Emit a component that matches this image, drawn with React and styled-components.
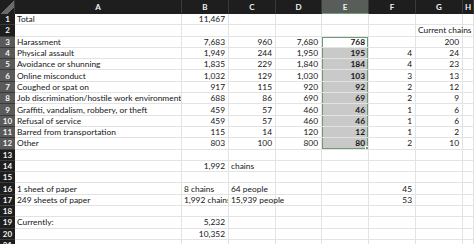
import styled, { createGlobalStyle } from "styled-components";

const GlobalStyle = createGlobalStyle`
  html, body {
    margin: 0;
    padding: 0;
    background: #ffffff;
    overflow: hidden;
  }
`;

const COLS = ["A", "B", "C", "D", "E", "F", "G", "H"];

// each row: [A, B, C, D, E, F, G]
const rows = [
  ["Total", "11,467"],
  ["", "", "", "", "", "", "Current chains"],
  ["Harassment", "7,683", "960", "7,680", "768", "", "200"],
  ["Physical assault", "1,949", "244", "1,950", "195", "4", "24"],
  ["Avoidance or shunning", "1,835", "229", "1,840", "184", "4", "23"],
  ["Online misconduct", "1,032", "129", "1,030", "103", "3", "13"],
  ["Coughed or spat on", "917", "115", "920", "92", "2", "12"],
  ["Job discrimination/hostile work environment", "688", "86", "690", "69", "2", "9"],
  ["Graffiti, vandalism, robbery, or theft", "459", "57", "460", "46", "1", "6"],
  ["Refusal of service", "459", "57", "460", "46", "1", "6"],
  ["Barred from transportation", "115", "14", "120", "12", "1", "2"],
  ["Other", "803", "100", "800", "80", "2", "10"],
  [],
  ["", "1,992", "chains"],
  [],
  ["1 sheet of paper", "8 chains", "64 people", "", "", "45"],
  ["249 sheets of paper", "1,992 chains", "15,939 people", "", "", "53"],
  [],
  ["Currently:", "5,232"],
  ["", "10,352"],
  [],
];

const isNumber = (v) => /^[\d,]+$/.test(v);

const Sheet = styled.div`
  display: grid;
  grid-template-columns: 15px 167px 47px 47px 46px 47px 47px 47px 1fr;
  grid-template-rows: 14px;
  grid-auto-rows: 11.3px;
  width: 474px;
  height: 244px;
  overflow: hidden;
  font-family: Lato, "Liberation Sans", sans-serif;
  font-size: 8.4px;
  color: #161616;
`;

const Corner = styled.div`
  background: linear-gradient(to bottom right, #1e1e1e 52%, #6a6a6a 52%, #6a6a6a 78%, #1e1e1e 78%);
  border-right: 1px solid #3a3a3a;
`;

const ColHead = styled.div`
  display: flex;
  align-items: center;
  justify-content: center;
  background: ${({ $active }) => ($active ? "#585d59" : "#1e1e1e")};
  border-right: 1px solid #3a3a3a;
  border-bottom: 1px solid ${({ $active }) => ($active ? "#6f9a76" : "#1e1e1e")};
  color: #f2f2f2;
  font-size: 8px;
  font-weight: 700;
`;

const RowHead = styled.div`
  display: flex;
  align-items: center;
  justify-content: center;
  background: ${({ $active }) => ($active ? "#5a5a5a" : "#1e1e1e")};
  border-bottom: 1px solid #3a3a3a;
  color: #f4f4f4;
  font-size: 8px;
  font-weight: 700;
`;

const Cell = styled.div`
  display: flex;
  align-items: center;
  justify-content: ${({ $num }) => ($num ? "flex-end" : "flex-start")};
  padding: 0 3px 0 2px;
  border-right: 1px solid #e3e3e3;
  border-bottom: 1px solid #e3e3e3;
  white-space: nowrap;
  overflow: ${({ $clip }) => ($clip ? "hidden" : "visible")};
  min-width: 0;
  font-weight: ${({ $bold }) => ($bold ? 700 : 400)};
  background: ${({ $sel }) => ($sel === "fill" ? "#c9c9c9" : "transparent")};
  box-shadow: ${({ $sel, $top, $bottom }) =>
    $sel
      ? [
          "inset 1px 0 #6f9a76",
          "inset -1px 0 #6f9a76",
          $top ? "inset 0 1px #6f9a76" : null,
          $bottom ? "inset 0 -1px #6f9a76" : null,
        ]
          .filter(Boolean)
          .join(", ")
      : "none"};
  position: relative;
`;

const Handle = styled.span`
  position: absolute;
  right: -2px;
  bottom: -2px;
  width: 3px;
  height: 3px;
  background: #6f9a76;
  border: 1px solid #ffffff;
  z-index: 2;
`;

export default function App() {
  return (
    <>
      <GlobalStyle />
      <Sheet>
        <Corner />
        {COLS.map((c) => (
          <ColHead key={c} $active={c === "E"}>
            {c}
          </ColHead>
        ))}
        {rows.map((row, r) => {
          const n = r + 1;
          const rowSel = n >= 3 && n <= 12;
          return [
            <RowHead key={`h${n}`} $active={rowSel}>
              {n}
            </RowHead>,
            ...COLS.map((c, ci) => {
              const v = row[ci] || "";
              const inE = c === "E" && rowSel;
              const nextFilled = !!row[ci + 1];
              return (
                <Cell
                  key={`${c}${n}`}
                  $num={isNumber(v)}
                  $bold={c === "E"}
                  $clip={nextFilled}
                  $sel={inE ? (n === 3 ? "active" : "fill") : null}
                  $top={n === 3}
                  $bottom={n === 12}
                >
                  {v}
                  {inE && n === 12 && <Handle />}
                </Cell>
              );
            }),
          ];
        })}
      </Sheet>
    </>
  );
}
